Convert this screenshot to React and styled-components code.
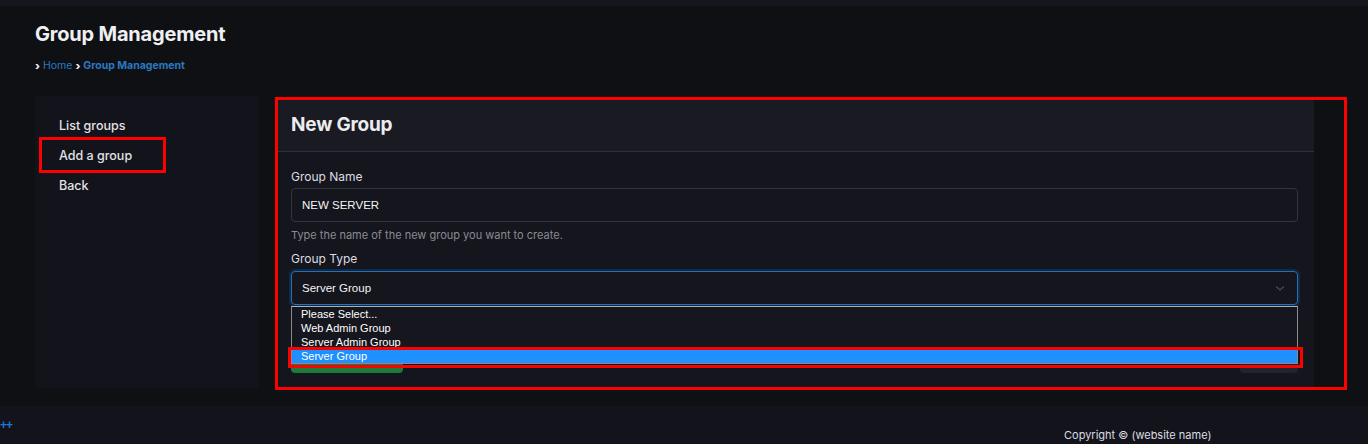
import React from 'react';
import styled, { createGlobalStyle } from 'styled-components';

const GlobalStyle = createGlobalStyle`
  html, body {
    margin: 0;
    padding: 0;
    background: #0f1014;
    font-family: "Inter", "Noto Sans", sans-serif;
  }
`;

const Page = styled.div`
  width: 1368px;
  min-height: 444px;
  background: #0f1014;
  display: flex;
  flex-direction: column;
`;

const TopStrip = styled.div`
  height: 6px;
  background: #15161e;
`;

const Header = styled.div`
  padding: 16px 35px 0;
`;

const Title = styled.h1`
  margin: 0;
  font-size: 20px;
  line-height: 24px;
  font-weight: 700;
  color: #f0f0f2;
  letter-spacing: -0.2px;
`;

const Breadcrumb = styled.div`
  margin-top: 13px;
  display: flex;
  align-items: center;
  gap: 3px;
  font-size: 10.5px;
  line-height: 14px;
`;

const Crumb = styled.span`
  color: #2b79c2;
  font-weight: ${(p) => (p.$active ? 700 : 400)};
`;

const Sep = styled.span`
  color: #f0f0f0;
  font-weight: 800;
  font-size: 11px;
`;

const Layout = styled.div`
  margin-top: 23px;
  padding-left: 35px;
  display: flex;
  gap: 18px;
  align-items: stretch;
`;

const Sidebar = styled.nav`
  width: 224px;
  height: 292px;
  background: #13141b;
  border-radius: 4px;
  padding-top: 15px;
  box-sizing: border-box;
`;

const NavItem = styled.div`
  position: relative;
  height: 30px;
  line-height: 30px;
  padding-left: 24px;
  font-size: 12.5px;
  font-weight: 500;
  color: #e2e2e6;
`;

const Mark = styled.div`
  position: absolute;
  border: 3px solid #ff0000;
  box-sizing: border-box;
  pointer-events: none;
`;

const Card = styled.section`
  position: relative;
  width: 1037px;
  background: #14151d;
  border-radius: 4px;
  margin-top: 1px;
`;

const CardHeader = styled.div`
  height: 54px;
  padding: 0 14px;
  display: flex;
  align-items: center;
  background: #191a22;
  border-bottom: 1px solid #2e3039;
  border-radius: 4px 4px 0 0;
`;

const CardTitle = styled.h2`
  margin: 0;
  font-size: 19px;
  font-weight: 700;
  color: #ececef;
  letter-spacing: -0.2px;
`;

const CardBody = styled.div`
  padding: 16px 16px 16px 14px;
`;

const Label = styled.label`
  display: block;
  font-size: 12px;
  line-height: 18px;
  font-weight: 400;
  color: #dcdce0;
  margin-bottom: ${(p) => p.$gap || 2}px;
`;

const Input = styled.div`
  height: 34px;
  box-sizing: border-box;
  border: 1px solid #30343e;
  border-radius: 4px;
  padding: 0 10px;
  display: flex;
  align-items: center;
  font-family: "Liberation Sans", Arial, sans-serif;
  font-size: 11.5px;
  color: #f4f4f4;
`;

const Help = styled.div`
  margin-top: 5px;
  font-size: 11px;
  line-height: 16px;
  color: #8a8b92;
  margin-bottom: 7px;
`;

const SelectWrap = styled.div`
  position: relative;
`;

const Select = styled(Input)`
  border: 1.5px solid #1d72c2;
  box-shadow: 0 0 0 2px rgba(29, 100, 170, 0.25);
  justify-content: space-between;
  padding-right: 12px;
`;

const Chevron = styled.svg`
  width: 10px;
  height: 10px;
`;

const OptionList = styled.div`
  position: absolute;
  top: calc(100% + 1px);
  left: 0;
  right: 0;
  background: #15161e;
  border: 1px solid #8a8a8a;
  border-top-color: #b0b0b0;
  font-family: "Liberation Sans", Arial, sans-serif;
  font-size: 11px;
  color: #ffffff;
  z-index: 5;
`;

const Option = styled.div`
  position: relative;
  height: 14px;
  line-height: 14px;
  padding-left: 9px;
  background: ${(p) => (p.$selected ? '#1e90ff' : 'transparent')};
`;

const Actions = styled.div`
  margin-top: 32px;
  display: flex;
  justify-content: space-between;
`;

const Button = styled.div`
  height: 36px;
  border-radius: 4px;
  width: ${(p) => p.$w}px;
  background: ${(p) => p.$bg};
`;

const Footer = styled.footer`
  margin-top: 17px;
  flex: 1;
  background: #13141b;
  display: grid;
  grid-template-columns: 1064px auto;
  height: 39px;
`;

const Plus = styled.span`
  color: #1b7ad0;
  font-weight: 700;
  font-size: 12px;
  font-family: "Liberation Sans", Arial, sans-serif;
  margin-top: 12px;
  letter-spacing: -1px;
`;

const Copyright = styled.span`
  align-self: end;
  font-size: 11px;
  line-height: 14px;
  font-weight: 400;
  color: #dcdce0;
  margin-bottom: 2px;
`;

export default function App() {
  return (
    <Page>
      <GlobalStyle />
      <TopStrip />
      <Header>
        <Title>Group Management</Title>
        <Breadcrumb>
          <Sep>›</Sep>
          <Crumb>Home</Crumb>
          <Sep>›</Sep>
          <Crumb $active>Group Management</Crumb>
        </Breadcrumb>
      </Header>

      <Layout>
        <Sidebar>
          <NavItem>List groups</NavItem>
          <NavItem>
            Add a group
            <Mark style={{ left: 4, top: -4, width: 127, height: 36 }} />
          </NavItem>
          <NavItem>Back</NavItem>
        </Sidebar>

        <Card>
          <Mark style={{ left: -2, top: 0, width: 1072, height: 293 }} />
          <CardHeader>
            <CardTitle>New Group</CardTitle>
          </CardHeader>
          <CardBody>
            <Label>Group Name</Label>
            <Input>NEW SERVER</Input>
            <Help>Type the name of the new group you want to create.</Help>
            <Label $gap={3}>Group Type</Label>
            <SelectWrap>
              <Select>
                Server Group
                <Chevron viewBox="0 0 10 10" fill="none">
                  <path d="M1 3.5 L5 7 L9 3.5" stroke="#4a4c55" strokeWidth="1.2" />
                </Chevron>
              </Select>
              <OptionList>
                <Option>Please Select...</Option>
                <Option>Web Admin Group</Option>
                <Option>Server Admin Group</Option>
                <Option $selected>Server Group</Option>
                <Mark style={{ left: -4, top: 40, width: 1015, height: 21 }} />
              </OptionList>
            </SelectWrap>
            <Actions>
              <Button $w={112} $bg="#1f7a3a" />
              <Button $w={58} $bg="#22232c" />
            </Actions>
          </CardBody>
        </Card>
      </Layout>

      <Footer>
        <Plus>++</Plus>
        <Copyright>Copyright © (website name)</Copyright>
      </Footer>
    </Page>
  );
}
